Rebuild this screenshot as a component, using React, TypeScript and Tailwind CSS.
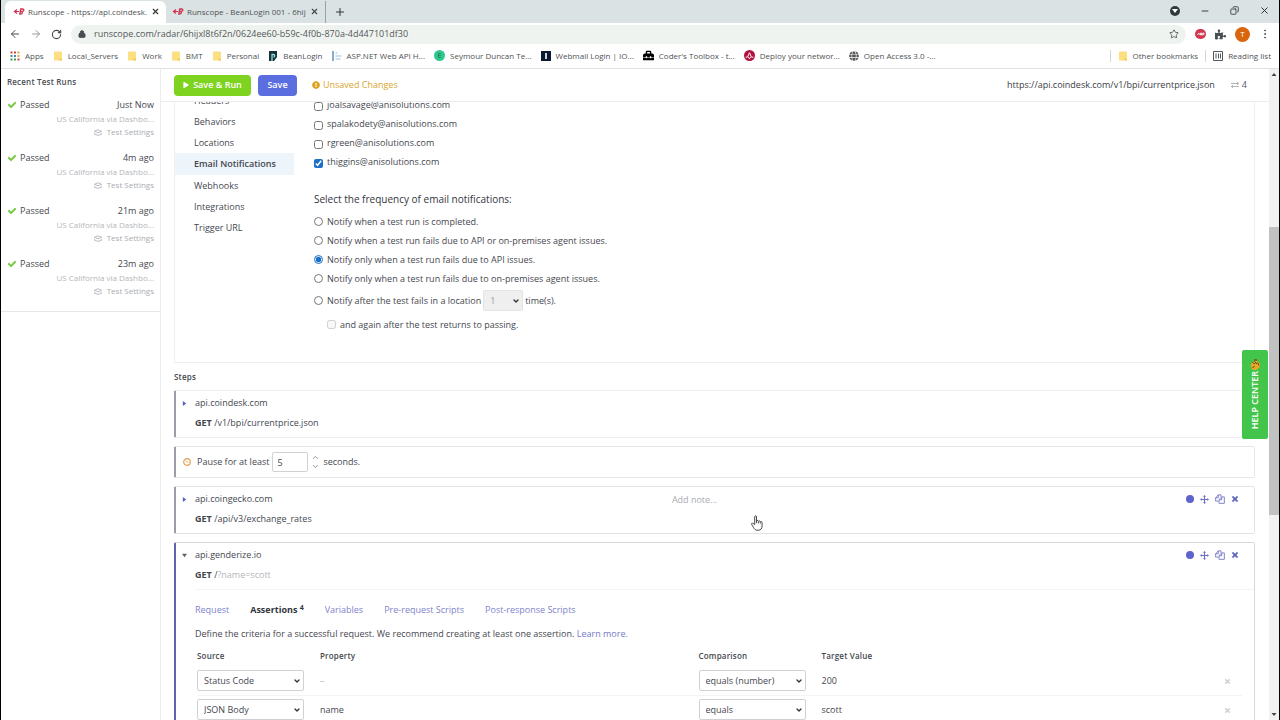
import type { ReactNode } from 'react';
import { FaCheck, FaExchangeAlt, FaExclamationCircle, FaGlobe, FaPlay, FaPuzzlePiece, FaTimes, FaToolbox } from 'react-icons/fa';
import { ArrowLeft, ArrowRight, ChevronDown, ChevronUp, Copy, Lock, Minus, MoreVertical, Plus, RotateCw, Star, X } from 'lucide-react';

const runs = ['Just Now', '4m ago', '21m ago', '23m ago'];

const menu = ['Headers', 'Behaviors', 'Locations', 'Email Notifications', 'Webhooks', 'Integrations', 'Trigger URL'];

const emails = [
  { address: 'joalsavage@anisolutions.com', checked: false },
  { address: 'spalakodety@anisolutions.com', checked: false },
  { address: 'rgreen@anisolutions.com', checked: false },
  { address: 'thiggins@anisolutions.com', checked: true },
];

const frequencies = [
  'Notify when a test run is completed.',
  'Notify when a test run fails due to API or on-premises agent issues.',
  'Notify only when a test run fails due to API issues.',
  'Notify only when a test run fails due to on-premises agent issues.',
];

const assertions = [
  { source: 'Status Code', property: '–', comparison: 'equals (number)', target: '200' },
  { source: 'JSON Body', property: 'name', comparison: 'equals', target: 'scott' },
];

function RunscopeIcon() {
  return (
    <svg viewBox="0 0 12 7" className="h-[7px] w-3 shrink-0" fill="none" stroke="#d2304f">
      <path d="M1.500 3.500H6M4 1.500L1.500 3.500 4 5.500" strokeWidth="1.200" />
      <path d="M6.800 6.200L7.700 1h2c1.700 0 1.500 2.400-.4 2.400H7.500c2.600 0 2.400 2.800-.2 2.800z" strokeWidth="1.300" />
    </svg>
  );
}

function FolderIcon() {
  return (
    <svg viewBox="0 0 10 10" className="size-[10px] shrink-0">
      <path d="M1 1.500Q1 .5 2 .5h6Q9 .5 9 1.500V9Q9 9.500 8.500 9.500h-7Q1 9.500 1 9z" fill="#fbdf80" />
      <path d="M6.500 7.500H9V9q0 .5-.5.5h-2z" fill="#f1cb58" />
    </svg>
  );
}

function AppsIcon() {
  const colors = ['#d6453d', '#d6453d', '#e0a93a', '#3f9b58', '#4a7fd6', '#e0a93a', '#3f9b58', '#3f9b58', '#d6453d'];
  return (
    <svg viewBox="0 0 10 10" className="size-[10px] shrink-0">
      {colors.map((c, i) => (
        <rect key={i} x={0.5 + (i % 3) * 3.5} y={0.5 + Math.floor(i / 3) * 3.5} width="2" height="2" fill={c} />
      ))}
    </svg>
  );
}

function BeanIcon() {
  return (
    <svg viewBox="0 0 10 10" className="size-[10px] shrink-0">
      <path d="M1 0h8v6L6 10H1z" fill="#16313a" />
      <path d="M4 10V3.500h1.500a1.200 1.200 0 010 2.500" stroke="#8fe0e0" strokeWidth="1.300" fill="none" />
    </svg>
  );
}

function AspIcon() {
  return (
    <svg viewBox="0 0 10 10" className="size-[10px] shrink-0" stroke="#5b94c4" fill="none">
      <path d="M1 0v10" strokeWidth="1.500" />
      <path d="M3.500 2h2M3.500 5h6M3.500 8h5" stroke="#9cc0dc" />
    </svg>
  );
}

function LetterIcon() {
  return (
    <span className="flex size-[11px] shrink-0 items-center justify-center rounded-full bg-[#2fc98e] text-[7px] leading-none text-[#17694a]">
      E
    </span>
  );
}

function MailIcon() {
  return (
    <svg viewBox="0 0 10 10" className="size-[10px] shrink-0">
      <rect width="10" height="10" fill="#0b1a33" />
      <rect x="4.200" y="2" width="1.600" height="6" fill="#fff" />
    </svg>
  );
}

function DeployIcon() {
  return (
    <svg viewBox="0 0 10 10" className="size-[11px] shrink-0">
      <circle cx="5" cy="5" r="5" fill="#b3123f" />
      <path d="M1.500 6.500h1.700L5 2.500l1.800 4h1.700M4 6.500L5 8l1-1.500" stroke="#fff" strokeWidth=".9" fill="none" />
    </svg>
  );
}

function MoveIcon() {
  return (
    <svg viewBox="0 0 10 10" className="size-[9px]" fill="#6a6cc4">
      <path d="M4.400 1.500h1.200v2.900h2.900v1.200H5.600v2.900H4.400V5.600H1.500V4.400h2.900z" />
      <path d="M5 0l1.700 2H3.300zM5 10L3.300 8h3.400zM0 5l2-1.700v3.400zM10 5L8 6.700V3.300z" />
    </svg>
  );
}

function FilesIcon() {
  return (
    <svg viewBox="0 0 12 12" className="size-[10px]" fill="none" stroke="#6a6cc4" strokeWidth="1">
      <path d="M4 8.500H.8V4.500L4 1h3.200v2.500M4 1v3.500H.8" />
      <path d="M4.800 7L8 3.500h3.200v7.700H4.800zM8 3.500V7H4.800" />
    </svg>
  );
}

function HelpIcon() {
  return (
    <svg viewBox="0 0 12 12" className="size-3">
      <path d="M1.500 6.500L4 2.500 8 2l3 2.500-.5 4L7 11H3.500z" fill="#e9a72b" />
      <path d="M3.500 3.500L6 5M5.500 2.500L8 5M3.500 8.500l2-1M8.500 3.500l1.500 3" stroke="#5a4310" strokeWidth="1" />
      <path d="M5 1h3" stroke="#8c3a1b" strokeWidth="1.200" />
    </svg>
  );
}

function HandCursor() {
  return (
    <svg viewBox="0 0 12 16" className="pointer-events-none absolute top-[515px] left-[750px] h-4 w-3">
      <path
        d="M3.700 9.500V1.800c0-1.300 1.800-1.300 1.800 0v4.400c.2-1 1.800-.9 1.900.2.3-.8 1.700-.7 1.900.4.4-.7 1.800-.4 1.800.8v3.200c0 2.500-1.200 4.500-4.200 4.500-2.600 0-3.500-1.200-4.500-3L.6 9.400c-.5-1 .7-1.700 1.500-.9z"
        fill="#fff"
        stroke="#333"
        strokeWidth=".9"
      />
      <path d="M5.500 6v2.200M7.400 6.500v2M9.300 7v1.700" stroke="#333" strokeWidth=".8" />
    </svg>
  );
}

const bookmarks: { name: string; icon: ReactNode }[] = [
  { name: 'Apps', icon: <AppsIcon /> },
  { name: 'Local_Servers', icon: <FolderIcon /> },
  { name: 'Work', icon: <FolderIcon /> },
  { name: 'BMT', icon: <FolderIcon /> },
  { name: 'Personal', icon: <FolderIcon /> },
  { name: 'BeanLogin', icon: <BeanIcon /> },
  { name: 'ASP.NET Web API H...', icon: <AspIcon /> },
  { name: 'Seymour Duncan Te...', icon: <LetterIcon /> },
  { name: 'Webmail Login | IO...', icon: <MailIcon /> },
  { name: "Coder's Toolbox - t...", icon: <FaToolbox className="size-[11px] shrink-0 text-black" /> },
  { name: 'Deploy your networ...', icon: <DeployIcon /> },
  { name: 'Open Access 3.0 -...', icon: <FaGlobe className="size-[10px] shrink-0 text-[#55585a]" /> },
];

function BrowserBar() {
  return (
    <div className="shrink-0 border-b border-[#dfe1e1] text-[8px] text-[#505355]">
      <div className="flex h-[23px] items-end bg-[#dae2e3] pl-1">
        <div className="flex h-[22px] w-[161px] items-center gap-[3px] rounded-t-md bg-white pr-[6px] pb-px pl-2">
          <RunscopeIcon />
          <span className="flex-1 whitespace-nowrap">Runscope - https://api.coindesk.</span>
          <button aria-label="Close tab"><X className="size-[9px] text-[#333]" strokeWidth={3} /></button>
        </div>
        <div className="flex h-[22px] w-[160px] items-center gap-[3px] border-r border-[#9aa2a4] pr-[6px] pb-px pl-[6px]">
          <RunscopeIcon />
          <span className="flex-1 whitespace-nowrap">Runscope - BeanLogin 001 - 6hij</span>
          <button aria-label="Close tab"><X className="size-[9px] text-[#444]" strokeWidth={3} /></button>
        </div>
        <button aria-label="New tab" className="flex h-[22px] items-center pb-px pl-2"><Plus className="size-3 text-[#333]" /></button>
        <div className="ml-auto flex h-[22px] items-center gap-5 pr-[9px] pb-[3px] text-[#222]">
          <button aria-label="Search tabs" className="flex size-[10px] items-center justify-center rounded-full bg-[#333a3d]">
            <svg viewBox="0 0 6 4" className="h-1 w-[6px]"><path d="M0 0h6L3 4z" fill="#fff" /></svg>
          </button>
          <button aria-label="Minimize"><Minus className="size-[10px]" /></button>
          <button aria-label="Restore"><Copy className="size-[9px] -scale-x-100" /></button>
          <button aria-label="Close"><X className="size-[11px]" /></button>
        </div>
      </div>
      <div className="flex h-[22px] items-center gap-[9px] bg-white pr-2 pl-2 text-[#4a4d50]">
        <button aria-label="Back"><ArrowLeft className="size-3" /></button>
        <button aria-label="Forward"><ArrowRight className="size-3 text-[#999]" /></button>
        <button aria-label="Reload"><RotateCw className="size-[11px]" strokeWidth={2.5} /></button>
        <div className="flex h-[19px] min-w-0 flex-1 items-center gap-2 rounded-full bg-[#eff3f0] px-[7px]">
          <Lock className="size-2 shrink-0" fill="#4a4d50" strokeWidth={3} />
          <input
            aria-label="Address"
            className="min-w-0 flex-1 text-[9px] text-[#55585a] outline-none"
            defaultValue="runscope.com/radar/6hijxl8t6f2n/0624ee60-b59c-4f0b-870a-4d447101df30"
          />
          <Star className="size-[10px] shrink-0" />
        </div>
        <span className="flex h-[10px] w-[11px] items-center justify-center rounded-full bg-[#cf3850]">
          <svg viewBox="0 0 8 4" className="h-1 w-2" fill="none" stroke="#fff" strokeWidth=".8">
            <path d="M.5 3L1.800 1 3 3M3.500 1h1v2h-1zM5.700 3.500V1H7v1.500H5.700" />
          </svg>
        </span>
        <FaPuzzlePiece className="size-[11px] shrink-0" />
        <span className="flex size-[15px] items-center justify-center rounded-full bg-[#d9660f] text-[8px] text-white">T</span>
        <button aria-label="Menu"><MoreVertical className="size-3" /></button>
      </div>
      <div className="flex h-[23px] items-center gap-[9px] bg-white pr-2 pb-[2px] pl-[9px] whitespace-nowrap">
        {bookmarks.map((b) => (
          <a key={b.name} href="#" className="flex items-center gap-[5px]">
            {b.icon}
            {b.name}
          </a>
        ))}
        <a href="#" className="ml-auto flex items-center gap-1 border-l border-[#d5d8d8] pl-[7px]"><FolderIcon />Other bookmarks</a>
        <a href="#" className="-ml-[2px] flex items-center gap-[5px] border-l border-[#d5d8d8] pl-[7px]">
          <svg viewBox="0 0 10 10" className="size-[10px]" fill="none" stroke="#55585a">
            <path d="M.5.5h9v9h-9zM3 2.500v5M5.500 2.500v5M7.500 2.500v5" />
          </svg>
          Reading list
        </a>
      </div>
    </div>
  );
}

function RecentRuns() {
  return (
    <aside className="w-[160px] shrink-0 border-r border-[#ececef]">
      <h2 className="h-[27px] pl-[6px] text-[8px] leading-[26px] font-semibold tracking-wide text-[#4b4d55]">Recent Test Runs</h2>
      <ul className="border-b border-[#e6e7ea] pb-[3px]">
        {runs.map((time) => (
          <li key={time} className="h-[53px] pr-[6px] pl-[7px]">
            <div className="flex h-[18px] items-center text-[9px] text-[#45474f]">
              <FaCheck className="mr-1 size-2 text-[#7ac943]" stroke="currentColor" strokeWidth={50} />
              Passed
              <span className="ml-auto">{time}</span>
            </div>
            <div className="text-right text-[8px] leading-[10px] whitespace-nowrap text-[#b4b6bb]">US California via Dashbo...</div>
            <div className="flex h-4 items-center justify-end gap-[5px] text-[8px] text-[#a9abb1]">
              <svg viewBox="0 0 10 8" className="h-[7px] w-2" fill="none" stroke="#a9abb1">
                <path d="M.5 2.500L5 .6l4.500 1.900L5 4.400zM.8 4.500v1.800L5 7.500l4.200-1.200V4.500" />
              </svg>
              Test Settings
            </div>
          </li>
        ))}
      </ul>
    </aside>
  );
}

function Toolbar() {
  return (
    <header className="flex h-[33px] shrink-0 items-center border-b border-[#ebecee] pr-[22px] pl-[13px] text-[9px]">
      <button className="flex h-[21px] w-[77px] items-center justify-center gap-1 rounded-sm bg-[#7ed321] font-semibold text-white">
        <FaPlay className="size-[6px]" />
        Save &amp; Run
      </button>
      <button className="ml-[7px] h-[21px] w-[39px] rounded-sm bg-[#5a6ee0] font-semibold text-white">Save</button>
      <FaExclamationCircle className="mr-[3px] ml-[15px] size-2 text-[#dca11d]" />
      <span className="text-[#d9a62e]">Unsaved Changes</span>
      <span className="ml-auto text-[#3b3d45]">https://api.coindesk.com/v1/bpi/currentprice.json</span>
      <FaExchangeAlt className="mr-[3px] ml-4 size-2 text-[#b4b6ba]" />
      <span className="text-[#55575f]">4</span>
    </header>
  );
}

function Dropdown({ label, value, className, disabled }: { label: string; value: string; className: string; disabled?: boolean }) {
  return (
    <span className={`relative inline-block ${className}`}>
      <select
        aria-label={label}
        disabled={disabled}
        className="block h-[21px] w-full appearance-none rounded-xs border border-[#cfd1d4] bg-white pl-[6px] text-[9px] text-[#45474f] disabled:border-[#e3e3e3] disabled:bg-[#efefef] disabled:text-[#999]"
      >
        <option>{value}</option>
      </select>
      <ChevronDown className="pointer-events-none absolute top-[7px] right-[3px] size-2 text-[#333]" strokeWidth={4} />
    </span>
  );
}

function Settings() {
  return (
    <section className="flex border-x border-b border-[#f0f0f2]">
      <nav className="-mt-3 w-[119px] shrink-0">
        {menu.map((item) => (
          <a
            key={item}
            href="#"
            className={
              item === 'Email Notifications'
                ? 'block bg-[#edf5fa] pb-px pl-[19px] leading-[21px] font-semibold'
                : 'block pl-[19px] leading-[21px]'
            }
          >
            {item}
          </a>
        ))}
      </nav>
      <form className="-mt-[7px] pb-7 pl-5">
        {emails.map((e) => (
          <label key={e.address} className="flex h-[19px] items-center gap-1">
            <input type="checkbox" defaultChecked={e.checked} className="mt-1 size-[9px] accent-[#1a6fc9]" />
            {e.address}
          </label>
        ))}
        <h3 className="mt-[18px] mb-[3px] text-[10px] leading-5 text-[#33353c]">Select the frequency of email notifications:</h3>
        {frequencies.map((f, i) => (
          <label key={f} className="flex h-[19px] items-center gap-1">
            <input type="radio" name="frequency" defaultChecked={i === 2} className="size-[9px] accent-[#1a6fc9]" />
            {f}
          </label>
        ))}
        <div className="mt-[2px] flex h-[21px] items-center">
          <label className="flex items-center gap-1">
            <input type="radio" name="frequency" className="size-[9px]" />
            Notify after the test fails in a location
          </label>
          <Dropdown label="Failure count" value="1" className="mx-[2px] w-10" disabled />
          time(s).
        </div>
        <label className="mt-1 ml-[13px] flex h-[19px] items-center gap-1">
          <input type="checkbox" disabled className="size-[9px]" />
          and again after the test returns to passing.
        </label>
      </form>
    </section>
  );
}

function StepHead({ host, path, query, open, tools }: { host: string; path: string; query?: string; open?: boolean; tools?: boolean }) {
  return (
    <div className="flex pt-[2px] pb-1">
      <div className="w-[46%]">
        <div className="flex h-5 items-center">
          <button aria-label="Toggle step" className="flex w-[19px] pl-[6px]">
            <svg viewBox="0 0 6 6" className="size-[5px]">
              <path d={open ? 'M0 1h6L3 5z' : 'M1 0l4 3-4 3z'} fill={open ? '#60636b' : '#5a5fc0'} />
            </svg>
          </button>
          {host}
        </div>
        <div className="pl-[19px] leading-5">
          <b>GET</b> {path}
          <span className="text-[#b4b6bb]">{query}</span>
        </div>
      </div>
      {tools && !open && (
        <input aria-label="Note" placeholder="Add note..." className="h-5 w-40 outline-none placeholder:text-[#a9abb1]" />
      )}
      {tools && (
        <div className="mr-[15px] ml-auto flex h-5 items-center gap-[6px] text-[#6567c4]">
          <button aria-label="Toggle enabled" className="size-2 rounded-full bg-[#5f63cc]" />
          <button aria-label="Move"><MoveIcon /></button>
          <button aria-label="Duplicate"><FilesIcon /></button>
          <button aria-label="Delete"><FaTimes className="size-2" stroke="currentColor" strokeWidth={40} /></button>
        </div>
      )}
    </div>
  );
}

function Assertions() {
  return (
    <div className="ml-[19px] border-t border-[#f3f3f5] pt-[10px] pr-[14px]">
      <nav className="flex gap-[21px] leading-5 text-[#8084cc]">
        <a href="#">Request</a>
        <a href="#" className="font-bold text-[#33353c]">Assertions <sup className="text-[7px]">4</sup></a>
        <a href="#">Variables</a>
        <a href="#">Pre-request Scripts</a>
        <a href="#">Post-response Scripts</a>
      </nav>
      <p className="mt-1 leading-5">
        Define the criteria for a successful request. We recommend creating at least one assertion.{' '}
        <a href="#" className="text-[#7478c4]">Learn more.</a>
      </p>
      <table className="mt-[2px] ml-[2px] w-full table-fixed">
        <thead>
          <tr className="h-5 text-left text-[8px] tracking-wide">
            <th className="w-[123px] font-semibold">Source</th>
            <th className="font-semibold">Property</th>
            <th className="w-[123px] font-semibold">Comparison</th>
            <th className="font-semibold">Target Value</th>
            <th className="w-[42px]" />
          </tr>
        </thead>
        <tbody>
          {assertions.map((a) => (
            <tr key={a.source} className="h-[29px] border-b border-[#f4f4f6]">
              <td><Dropdown label="Source" value={a.source} className="w-[107px] align-middle" /></td>
              <td className={a.property === '–' ? 'text-[#b4b6bb]' : ''}>{a.property}</td>
              <td><Dropdown label="Comparison" value={a.comparison} className="w-[107px] align-middle" /></td>
              <td>{a.target}</td>
              <td>
                <button aria-label="Remove" className="ml-6 align-middle">
                  <FaTimes className="size-[7px] text-[#cfd0d4]" stroke="currentColor" strokeWidth={30} />
                </button>
              </td>
            </tr>
          ))}
        </tbody>
      </table>
    </div>
  );
}

function Steps() {
  return (
    <section className="pt-1">
      <h2 className="mb-[3px] text-[8px] leading-5 font-semibold tracking-wide">Steps</h2>
      <div className="flex flex-col gap-2">
        <div className="rounded-xs border border-l-2 border-[#f0f0f3] border-l-[#9a9ca6]">
          <StepHead host="api.coindesk.com" path="/v1/bpi/currentprice.json" />
        </div>
        <div className="flex h-8 items-center rounded-xs border border-l-2 border-[#e6e7ea] border-l-[#9a9ca6] pl-[7px]">
          <svg viewBox="0 0 8 8" className="mr-[6px] size-2" fill="none" stroke="#e0a050">
            <circle cx="4" cy="4" r="3.300" strokeWidth="1.200" />
            <path d="M2.500 2.500L4 4.200h1.500" strokeWidth=".8" />
          </svg>
          <label htmlFor="pause">Pause for at least</label>
          <input id="pause" defaultValue="5" className="mx-[3px] h-5 w-9 rounded-xs border border-[#cfd1d4] pl-1 outline-none" />
          <span className="mr-[3px] flex flex-col text-[#777]">
            <button aria-label="Increase"><ChevronUp className="size-[9px]" /></button>
            <button aria-label="Decrease"><ChevronDown className="size-[9px]" /></button>
          </span>
          seconds.
        </div>
        <div className="rounded-xs border border-l-2 border-[#e2e3e6] border-l-[#9a9ca6]">
          <StepHead host="api.coingecko.com" path="/api/v3/exchange_rates" tools />
        </div>
        <div className="rounded-xs border border-l-2 border-[#d6d7dc] border-l-[#5f62ad]">
          <StepHead host="api.genderize.io" path="/" query="?name=scott" open tools />
          <Assertions />
        </div>
      </div>
    </section>
  );
}

function Scrollbar() {
  return (
    <div className="flex w-[10px] shrink-0 flex-col items-center bg-[#f1f1f1]">
      <svg viewBox="0 0 6 10" className="h-[10px] w-[6px] shrink-0"><path d="M.5 7h5L3 4z" fill="#444" /></svg>
      <div className="flex-[148]" />
      <div className="w-full flex-[288] bg-[#c1c1c1]" />
      <div className="flex-[195]" />
      <svg viewBox="0 0 6 10" className="h-[10px] w-[6px] shrink-0"><path d="M.5 3h5L3 6z" fill="#444" /></svg>
    </div>
  );
}

export default function App() {
  return (
    <div className="relative flex h-screen flex-col overflow-hidden border-x border-black bg-white font-['Open_Sans',sans-serif]">
      <BrowserBar />
      <div className="flex min-h-0 flex-1">
        <RecentRuns />
        <div className="flex min-w-0 flex-1 flex-col">
          <Toolbar />
          <main className="min-h-0 flex-1 overflow-hidden pr-[14px] pl-[13px] text-[9px] text-[#45474f]">
            <Settings />
            <Steps />
          </main>
        </div>
        <Scrollbar />
      </div>
      <button className="absolute top-[350px] right-[11px] flex h-[89px] w-[26px] flex-col items-center justify-center rounded-xs bg-[#43c44a] text-[9px] font-semibold text-white">
        <HelpIcon />
        <span className="rotate-180 [writing-mode:vertical-rl]">HELP CENTER</span>
      </button>
      <HandCursor />
    </div>
  );
}
